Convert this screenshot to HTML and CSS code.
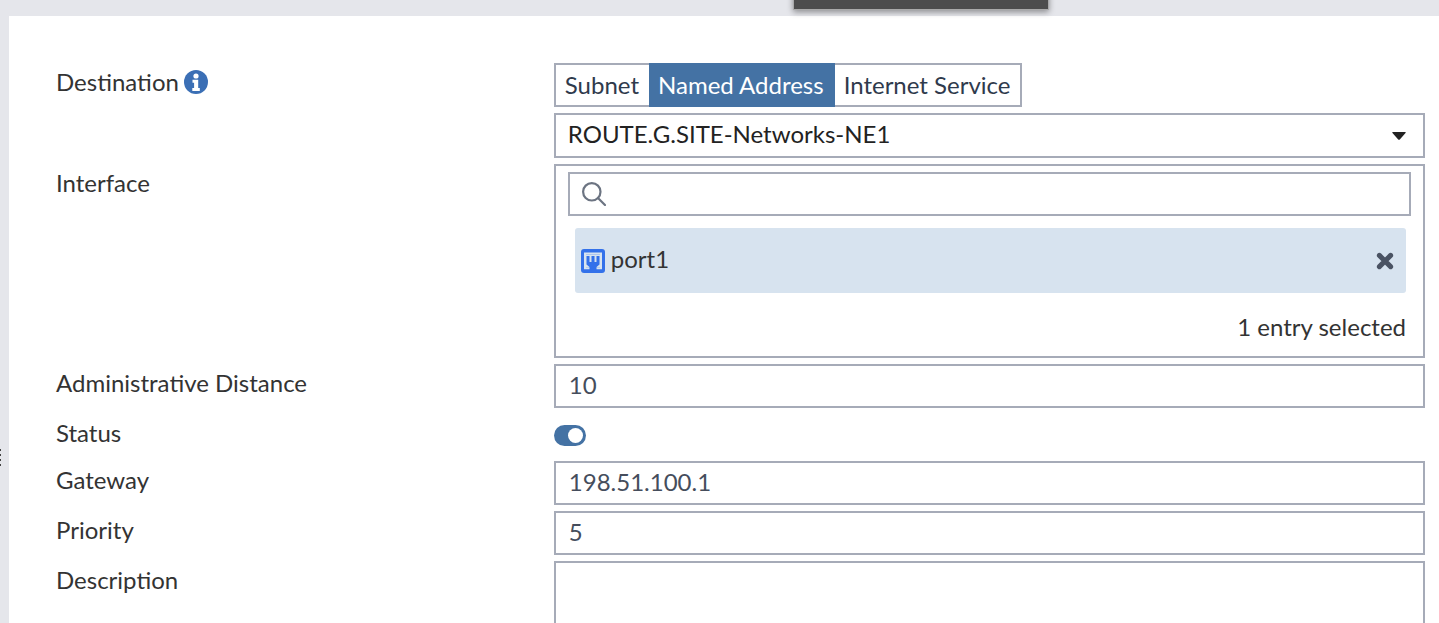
FILE: index.html
```
<!DOCTYPE html>
<html lang="en">
<head>
<meta charset="utf-8">
<title>Static Route</title>
<link rel="stylesheet" href="styles.css">
</head>
<body>
<div class="tooltip"></div>
<div class="page">
  <div class="splitter"><i></i><i></i><i></i><i></i></div>
  <form class="form">
    <div class="row">
      <div class="label">
        <span id="destination-label">Destination</span>
        <svg class="info" viewBox="0 0 24 24" aria-hidden="true">
          <circle cx="12" cy="12" r="12" fill="#3b6fb5"/>
          <circle cx="12" cy="6" r="2.6" fill="#fff"/>
          <path d="M8.500 9.800h5.700v8.200h1.600v2.900H8.300V18h1.800v-5.300H8.500z" fill="#fff"/>
        </svg>
      </div>
      <div class="field stack">
        <div class="segments" role="group" aria-labelledby="destination-label">
          <button type="button" class="segment">Subnet</button>
          <button type="button" class="segment active" aria-pressed="true">Named Address</button>
          <button type="button" class="segment">Internet Service</button>
        </div>
        <div class="select-wrap">
          <select class="control select" aria-labelledby="destination-label">
            <option>ROUTE.G.SITE-Networks-NE1</option>
          </select>
          <svg class="caret" viewBox="0 0 14 8" aria-hidden="true"><path d="M.8 0h12.400q1 0 .3.900L7.800 7.400q-.8.800-1.600 0L.5.900Q-.2 0 .8 0z" fill="#222"/></svg>
        </div>
      </div>
    </div>
    <div class="row">
      <label class="label" for="interface-search">Interface</label>
      <div class="field panel">
        <div class="search">
          <svg class="search-icon" viewBox="0 0 24 24" aria-hidden="true"><circle cx="9.800" cy="9.800" r="8.700"/><path d="M16 16l7 7"/></svg>
          <input id="interface-search" class="search-input" type="text">
        </div>
        <div class="entry">
          <svg class="port-icon" viewBox="0 0 24 24" aria-hidden="true">
            <rect width="24" height="24" rx="3" fill="#3371ea"/>
            <path d="M3 3.500h18v16.800h-6v-2h4V5.500H5v12.800h4v2H3z" fill="#d7e3ef"/>
            <path d="M5 5.500h14v12.800h-4V22H9v-3.700H5z" fill="#d7e3ef"/>
            <path d="M5.500 7h3v6h2V7h3v6h2V7h3v8.500l-3 2.500V22h-7v-4l-3-2.500z" fill="#3371ea"/>
          </svg>
          <span class="entry-name">port1</span>
          <button type="button" class="remove" aria-label="Remove port1">
            <svg class="cross" viewBox="0 0 16 16" aria-hidden="true"><path d="M3 3l10 10M13 3L3 13"/></svg>
          </button>
        </div>
        <div class="summary">1 entry selected</div>
      </div>
    </div>
    <div class="row">
      <label class="label" for="distance">Administrative Distance</label>
      <input id="distance" class="control field" type="text" value="10">
    </div>
    <div class="row status">
      <label class="label" for="status">Status</label>
      <input id="status" class="toggle" type="checkbox" role="switch" checked>
    </div>
    <div class="row">
      <label class="label" for="gateway">Gateway</label>
      <input id="gateway" class="control field" type="text" value="198.51.100.1">
    </div>
    <div class="row">
      <label class="label" for="priority">Priority</label>
      <input id="priority" class="control field" type="text" value="5">
    </div>
    <div class="row">
      <label class="label" for="description">Description</label>
      <textarea id="description" class="control field description"></textarea>
    </div>
  </form>
</div>
</body>
</html>
```
FILE: styles.css
```
* { box-sizing: border-box; }

body {
  margin: 0;
  height: 100vh;
  overflow: hidden;
  background: #e5e6eb;
  color: #333;
  font: 24px/38px Lato, Carlito, "Open Sans", sans-serif;
}

button, input, select, textarea { font: inherit; margin: 0; }

.page {
  display: flex;
  min-height: 100vh;
  padding-top: 16px;
}

.splitter {
  flex: 0 0 9px;
  display: flex;
  flex-direction: column;
  justify-content: center;
  gap: 3px;
  height: calc(100vh + 259px);
}

.splitter i {
  width: 1px;
  height: 2px;
  background: #444;
}

.form {
  flex: 1;
  display: flex;
  flex-direction: column;
  gap: 6px;
  padding: 47px 14px 0 47px;
  background: #fff;
}

.row {
  display: grid;
  grid-template-columns: 4fr 7fr;
  align-items: start;
}

.label {
  display: flex;
  align-items: center;
  gap: 5px;
}

.info { width: 24px; height: 24px; }

.field { width: 100%; min-width: 0; }

.stack {
  display: flex;
  flex-direction: column;
  gap: 6px;
}

.segments { display: flex; }

.segment {
  height: 44px;
  padding: 0 9px;
  border: 2px solid #a6abb8;
  background: #fff;
  color: #2f3a4c;
}

.segment + .segment { border-left: 0; }

.segment:first-child { border-right: 0; padding-right: 10px; }

.segment.active {
  border-color: #4472a4;
  background: #4472a4;
  color: #fff;
}

.control {
  display: block;
  height: 44px;
  padding: 0 13px 4px;
  border: 2px solid #a6abb8;
  border-radius: 0;
  background: #fff;
  color: #454d5c;
  outline: none;
}

.select-wrap { position: relative; }

.select {
  width: 100%;
  height: 45px;
  padding: 0 12px 4px;
  appearance: none;
  color: #222;
}

.caret {
  position: absolute;
  right: 19px;
  top: 19px;
  width: 14px;
  height: 8px;
  pointer-events: none;
}

.panel {
  border: 2px solid #a6abb8;
  padding: 6px 12px 10px;
}

.search {
  display: flex;
  align-items: center;
  gap: 12px;
  height: 44px;
  padding: 0 12px;
  border: 2px solid #a6abb8;
}

.search-icon {
  width: 24px;
  height: 24px;
  fill: none;
  stroke: #6c7482;
  stroke-width: 2.2;
  stroke-linecap: round;
}

.search-input {
  flex: 1;
  min-width: 0;
  height: 38px;
  padding: 0;
  border: 0;
  outline: none;
}

.entry {
  display: flex;
  align-items: center;
  gap: 6px;
  height: 65px;
  margin: 12px 5px 0 7px;
  padding: 0 12px 0 6px;
  border-radius: 3px;
  background: #d7e3ef;
}

.port-icon { width: 24px; height: 24px; }

.entry-name { flex: 1; padding-bottom: 4px; }

.remove {
  display: flex;
  padding: 0;
  border: 0;
  background: none;
}

.cross {
  width: 18px;
  height: 18px;
  stroke: #4a5363;
  stroke-width: 4.4;
  stroke-linecap: round;
}

.summary {
  margin: 15px 5px 0 0;
  text-align: right;
}

.status { min-height: 41px; }

.toggle {
  appearance: none;
  display: flex;
  justify-content: flex-end;
  align-items: center;
  width: 32px;
  height: 21px;
  margin-top: 11px;
  padding: 3px;
  border-radius: 11px;
  background: #4472a4;
}

.toggle::before {
  content: "";
  width: 15px;
  height: 15px;
  border-radius: 50%;
  background: #fff;
}

.description {
  height: 120px;
  resize: none;
}

.tooltip {
  position: absolute;
  top: -40px;
  left: 793px;
  width: 256px;
  height: 50px;
  border: 1px solid #aaa;
  background: #4d4d4d;
  box-shadow: 0 2px 6px rgba(0, 0, 0, .4);
}
```
